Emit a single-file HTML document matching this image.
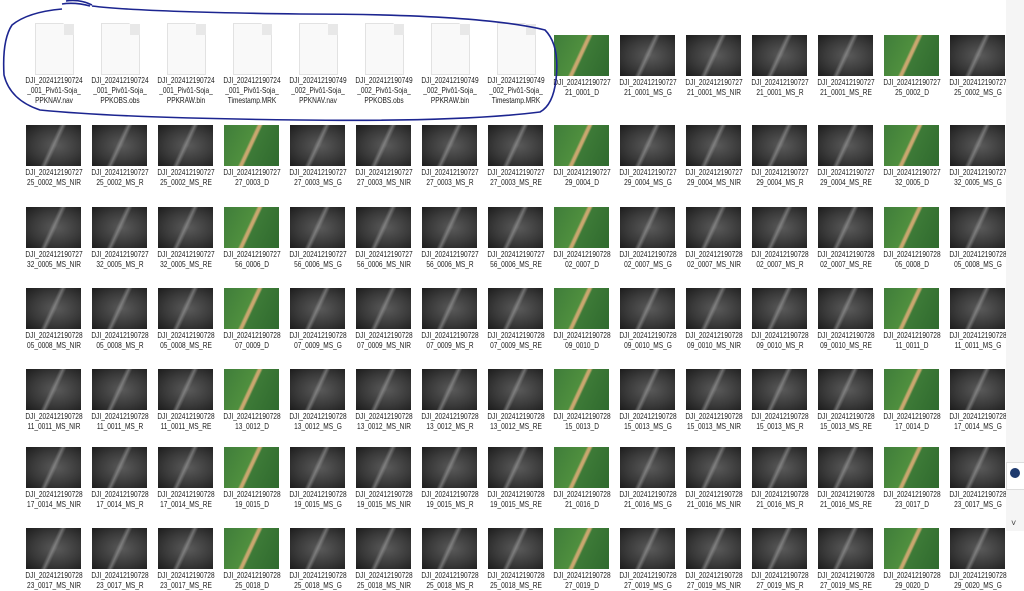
<!DOCTYPE html>
<html><head><meta charset="utf-8">
<style>
html,body{margin:0;padding:0;width:1024px;height:531px;overflow:hidden;background:#fff;font-family:"Liberation Sans",sans-serif}
.c{position:absolute;width:66px}
.t{position:absolute;left:0;width:55px;height:41px}
.l{position:absolute;left:-12px;width:80px;text-align:center;font-size:8.2px;line-height:10px;color:#1a1a1a;transform:scaleX(.8);white-space:nowrap}
.dk{background:radial-gradient(ellipse at 55% 50%,#5a5a5a 0%,#3a3a3a 55%,#1c1c1c 100%)}
.dk::after{content:"";position:absolute;left:0;top:0;right:0;bottom:0;background:linear-gradient(115deg,transparent 45%,rgba(170,170,170,.5) 50%,transparent 55%)}
.gr{background:linear-gradient(115deg,#3f7d3a 0%,#4f8f3e 44%,#c9a76f 47%,#c9a76f 50%,#3d7a37 53%,#2f6a2e 100%)}
.fi{position:absolute;width:37px;height:50px;background:#f9f9f9;border:1px solid #e2e2e2;clip-path:polygon(0 0,72% 0,100% 22%,100% 100%,0 100%)}
.fo{position:absolute;width:10px;height:11px;background:#e8e8e8}
#sb{position:absolute;left:1006px;top:0;width:18px;height:531px;background:#f5f5f5}
</style></head><body>
<div id="g"></div>
<div id="sb"></div>
<div style="position:absolute;left:1006px;top:462px;width:18px;height:26px;background:#fff;border:1px solid #ddd"></div>
<div style="position:absolute;left:1010px;top:468px;width:10px;height:10px;border-radius:50%;background:#1e3a6e"></div>
<div style="position:absolute;left:1011px;top:518px;font-size:9px;color:#444">˅</div>
<svg width="1024" height="531" style="position:absolute;left:0;top:0" fill="none" stroke="#1c2590" stroke-width="1.6">
<path d="M62 4 Q75 2 90 6 M66 1 Q80 -1 92 5 M92 6 Q140 12 300 14 Q480 14 545 30 Q560 45 556 80 Q553 105 540 112 Q460 122 300 120 Q120 118 40 110 Q10 100 4 75 Q2 40 12 25 Q28 12 62 9"/>
</svg>
<script>
var g=document.getElementById('g'),h='';
var files=[["DJI_202412190724","_001_Pivô1-Soja_","PPKNAV.nav"],["DJI_202412190724","_001_Pivô1-Soja_","PPKOBS.obs"],["DJI_202412190724","_001_Pivô1-Soja_","PPKRAW.bin"],["DJI_202412190724","_001_Pivô1-Soja_","Timestamp.MRK"],["DJI_202412190749","_002_Pivô1-Soja_","PPKNAV.nav"],["DJI_202412190749","_002_Pivô1-Soja_","PPKOBS.obs"],["DJI_202412190749","_002_Pivô1-Soja_","PPKRAW.bin"],["DJI_202412190749","_002_Pivô1-Soja_","Timestamp.MRK"]];
var grp=[["7","21_0001"],["7","25_0002"],["7","27_0003"],["7","29_0004"],["7","32_0005"],["7","56_0006"],["8","02_0007"],["8","05_0008"],["8","07_0009"],["8","09_0010"],["8","11_0011"],["8","13_0012"],["8","15_0013"],["8","17_0014"],["8","19_0015"],["8","21_0016"],["8","23_0017"],["8","25_0018"],["8","27_0019"],["8","29_0020"]];
var suf=["D","MS_G","MS_NIR","MS_R","MS_RE"];
var rows=[35,125,207,288,369,447,528];
for(var i=0;i<8;i++){var x=26+i*66;
h+='<div class="c" style="left:'+x+'px;top:0"><div class="fi" style="left:9px;top:23px"></div><div class="fo" style="left:38px;top:24px"></div><div class="l" style="top:76px">'+files[i].join('<br>')+'</div></div>';}
var k=0;
for(var r=0;r<7;r++){for(var c=(r==0?8:0);c<15;c++){var gi=Math.floor(k/5),s=k%5,x=26+c*66,y=rows[r];
var gg=grp[gi];
h+='<div class="c" style="left:'+x+'px;top:'+y+'px"><div class="t '+(s==0?'gr':'dk')+'"></div><div class="l" style="top:43px">DJI_20241219072'+gg[0]+'<br>'+gg[1]+'_'+suf[s]+'</div></div>';k++;}}
g.innerHTML=h;
</script>
</body></html>
